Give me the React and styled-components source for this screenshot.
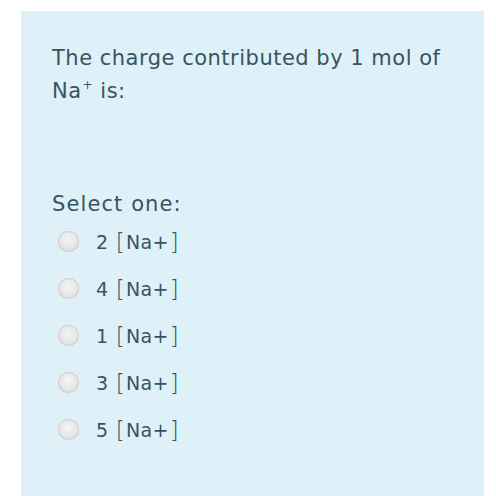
import React from 'react';
import styled, { createGlobalStyle } from 'styled-components';

const GlobalStyle = createGlobalStyle`
  html, body {
    margin: 0;
    padding: 0;
    background: #ffffff;
  }
  body {
    font-family: "DejaVu Sans", "Liberation Sans", sans-serif;
  }
`;

const Page = styled.div`
  padding: 11px 12px 0 21px;
  height: 496px;
  box-sizing: border-box;
  overflow: hidden;
`;

const Panel = styled.div`
  background: #def1f8;
  height: 100%;
  padding: 31px 10px 0 31px;
  box-sizing: border-box;
  color: #36555d;
`;

const Question = styled.p`
  margin: 0;
  font-size: 21px;
  line-height: 33px;
  letter-spacing: 0.5px;
  white-space: nowrap;
`;

const Sup = styled.sup`
  font-size: 12px;
  line-height: 0;
  vertical-align: 9px;
  margin-left: 1px;
`;

const Prompt = styled.div`
  margin-top: 82px;
  font-size: 21px;
  line-height: 28px;
  letter-spacing: 1.1px;
`;

const Options = styled.div`
  display: flex;
  flex-direction: column;
  padding-left: 6px;
`;

const Option = styled.label`
  display: flex;
  align-items: center;
  gap: 17px;
  height: 47px;
  font-size: 19px;
  letter-spacing: 0.3px;
`;

const Radio = styled.span`
  width: 21px;
  height: 21px;
  border-radius: 50%;
  flex-shrink: 0;
  background: radial-gradient(circle at 50% 40%, #f4f4f4 0%, #e6e6e6 55%, #d4d4d4 100%);
  box-shadow: inset 0 0 0 1px #cfcfcf;
`;

const Label = styled.span`
  display: inline-flex;
  align-items: center;
`;

const Bracket = styled.span`
  font-weight: 300;
  font-size: 23px;
  margin: 0 1px;
`;

const answers = ['2', '4', '1', '3', '5'];

export default function App() {
  return (
    <>
      <GlobalStyle />
      <Page>
        <Panel>
          <Question>
            The charge contributed by 1 mol of
            <br />
            Na<Sup>+</Sup> is:
          </Question>
          <Prompt>Select one:</Prompt>
          <Options>
            {answers.map((n) => (
              <Option key={n}>
                <Radio />
                <Label>
                  {n}&nbsp;<Bracket>[</Bracket>Na+<Bracket>]</Bracket>
                </Label>
              </Option>
            ))}
          </Options>
        </Panel>
      </Page>
    </>
  );
}
